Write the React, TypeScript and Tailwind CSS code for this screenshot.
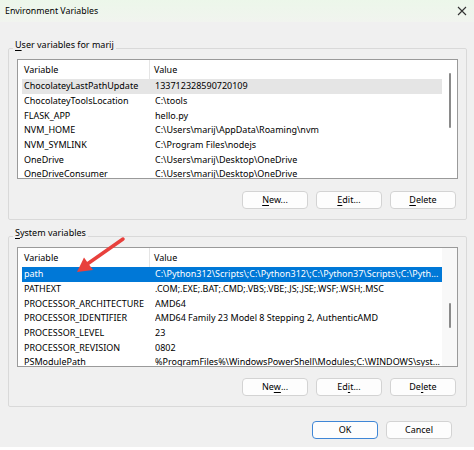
import React from "react";

type Sel = "none" | "gray" | "blue";

function Row({ name, value, sel = "none" }: { name: string; value: string; sel?: Sel }) {
  const cls =
    sel === "gray"
      ? "bg-[#e5e5e5] text-black"
      : sel === "blue"
      ? "bg-[#0078d7] text-white"
      : "text-black";
  return (
    <div className={`ml-[4px] flex h-[14.67px] shrink-0 items-center ${cls}`}>
      <div className="w-[133px] shrink-0 overflow-hidden whitespace-nowrap pl-[2px]">{name}</div>
      <div className="min-w-0 flex-1 overflow-hidden whitespace-nowrap">{value}</div>
    </div>
  );
}

function ListView({
  rows,
  thumbTop,
  thumbH,
  trackBg,
}: {
  rows: { name: string; value: string; sel?: Sel }[];
  thumbTop: string;
  thumbH: string;
  trackBg: string;
}) {
  return (
    <div className="flex h-[120px] min-w-0 shrink-0 border border-[#9a9a9a] bg-white">
      <div className="flex min-w-0 flex-1 flex-col overflow-hidden">
        <div className="flex h-[19px] shrink-0 items-center">
          <div className="flex h-full w-[132px] items-center border-r border-[#e5e5e5] pl-[6px]">Variable</div>
          <div className="pl-[4px]">Value</div>
        </div>
        {rows.map((r) => (
          <Row key={r.name} name={r.name} value={r.value} sel={r.sel} />
        ))}
      </div>
      <div className={`flex w-[15px] shrink-0 justify-center ${trackBg} ${thumbTop}`}>
        <div className={`w-[2px] rounded-full bg-[#8a8a8a] ${thumbH}`} />
      </div>
    </div>
  );
}

function Btn({ children, ok = false }: { children: React.ReactNode; ok?: boolean }) {
  return (
    <div
      className={`flex h-[18px] w-[66px] items-center justify-center rounded-[4px] border bg-[#fdfdfd] text-black ${
        ok ? "border-[#3f86d6]" : "border-[#d3d3d3]"
      }`}
    >
      {children}
    </div>
  );
}

function U({ children }: { children: React.ReactNode }) {
  return <span className="underline decoration-1 underline-offset-[2px]">{children}</span>;
}

export default function App() {
  const userRows = [
    { name: "ChocolateyLastPathUpdate", value: "133712328590720109", sel: "gray" as Sel },
    { name: "ChocolateyToolsLocation", value: "C:\\tools" },
    { name: "FLASK_APP", value: "hello.py" },
    { name: "NVM_HOME", value: "C:\\Users\\marij\\AppData\\Roaming\\nvm" },
    { name: "NVM_SYMLINK", value: "C:\\Program Files\\nodejs" },
    { name: "OneDrive", value: "C:\\Users\\marij\\Desktop\\OneDrive" },
    { name: "OneDriveConsumer", value: "C:\\Users\\marij\\Desktop\\OneDrive" },
  ];
  const sysRows = [
    {
      name: "path",
      value: "C:\\Python312\\Scripts\\;C:\\Python312\\;C:\\Python37\\Scripts\\;C:\\Pyth...",
      sel: "blue" as Sel,
    },
    { name: "PATHEXT", value: ".COM;.EXE;.BAT;.CMD;.VBS;.VBE;.JS;.JSE;.WSF;.WSH;.MSC" },
    { name: "PROCESSOR_ARCHITECTURE", value: "AMD64" },
    { name: "PROCESSOR_IDENTIFIER", value: "AMD64 Family 23 Model 8 Stepping 2, AuthenticAMD" },
    { name: "PROCESSOR_LEVEL", value: "23" },
    { name: "PROCESSOR_REVISION", value: "0802" },
    { name: "PSModulePath", value: "%ProgramFiles%\\WindowsPowerShell\\Modules;C:\\WINDOWS\\syst..." },
  ];

  return (
    <div className="relative flex h-[450px] w-[474px] flex-col overflow-hidden bg-[#f0f0f0] font-['Noto_Sans',sans-serif] text-[9px] leading-[16px] text-black">
      {/* Title bar */}
      <div className="flex h-[22px] shrink-0 items-center justify-between bg-gradient-to-b from-[#ecf7ea] to-[#f1f4ef] pl-[5px] pr-[6px]">
        <span className="text-[8.8px]">Environment Variables</span>
        <svg width="10" height="10" viewBox="0 0 10 10" className="mr-[1px]">
          <path d="M1 1 L9 9 M9 1 L1 9" stroke="#333" strokeWidth="1.1" fill="none" />
        </svg>
      </div>

      <div className="flex shrink-0 flex-col pt-[15px]">
        {/* User variables */}
        <fieldset className="ml-[8px] mr-[7px] min-w-0 shrink-0 rounded-[2px] border border-[#d9d9d9] px-[8px] pb-[10px]">
          <legend className="-ml-[4px] px-[2px] pb-[6px]">
            <U>U</U>ser variables for marij
          </legend>
          <ListView rows={userRows} thumbTop="pt-[13px]" thumbH="h-[55px]" trackBg="bg-white" />
          <div className="mr-[2px] mt-[12px] flex justify-end gap-[8px]">
            <Btn>
              <U>N</U>ew...
            </Btn>
            <Btn>
              <U>E</U>dit...
            </Btn>
            <Btn>
              <U>D</U>elete
            </Btn>
          </div>
        </fieldset>

        {/* System variables */}
        <fieldset className="ml-[8px] mr-[7px] mt-[5px] min-w-0 shrink-0 rounded-[2px] border border-[#d9d9d9] px-[8px] pb-[10px]">
          <legend className="-ml-[4px] px-[2px] pb-[6px]">
            <U>S</U>ystem variables
          </legend>
          <ListView rows={sysRows} thumbTop="pt-[55px]" thumbH="h-[25px]" trackBg="bg-[#f8f8f8]" />
          <div className="mr-[2px] mt-[11px] flex justify-end gap-[8px]">
            <Btn>
              Ne<U>w</U>...
            </Btn>
            <Btn>
              Ed<U>i</U>t...
            </Btn>
            <Btn>
              De<U>l</U>ete
            </Btn>
          </div>
        </fieldset>

        <div className="mr-[22px] mt-[14px] flex justify-end gap-[8px]">
          <Btn ok>OK</Btn>
          <Btn>Cancel</Btn>
        </div>
      </div>

      <div className="flex-1" />
      <div className="h-[3px] shrink-0 bg-white" />

      {/* Red annotation arrow */}
      <svg className="pointer-events-none absolute left-0 top-0" width="474" height="450">
        <line x1="123" y1="239" x2="88" y2="263.5" stroke="#e8403c" strokeWidth="3.5" strokeLinecap="round" />
        <polygon points="77,272 84,257.5 93,270" fill="#e8403c" />
      </svg>
    </div>
  );
}
